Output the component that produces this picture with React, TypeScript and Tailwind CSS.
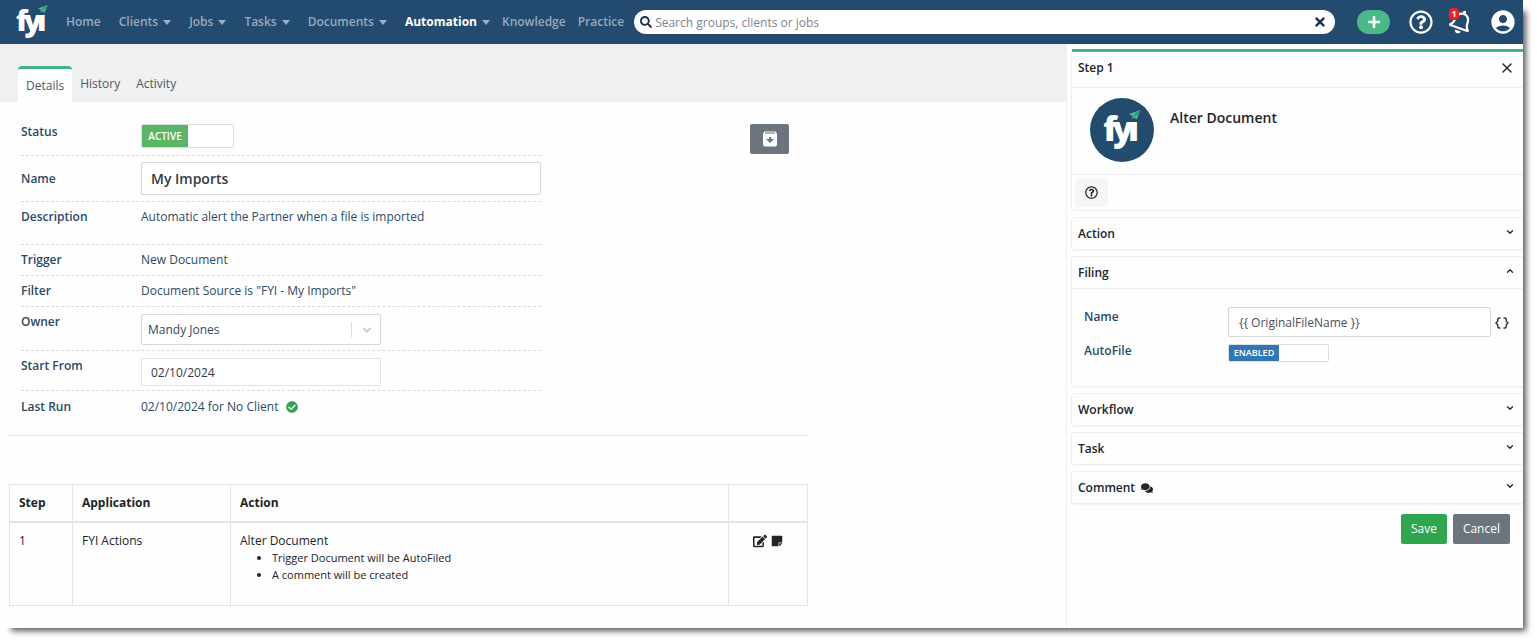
import { useState, type ReactNode } from "react";
import {
  FaCheckCircle,
  FaChevronDown,
  FaComments,
  FaEdit,
  FaPlus,
  FaRegBell,
  FaRegQuestionCircle,
  FaSearch,
  FaStickyNote,
  FaTimes,
} from "react-icons/fa";
import { MdAccountCircle } from "react-icons/md";
import { LuChevronDown, LuChevronUp, LuX } from "react-icons/lu";

const NAV = [
  { label: "Home", menu: false },
  { label: "Clients", menu: true },
  { label: "Jobs", menu: true },
  { label: "Tasks", menu: true },
  { label: "Documents", menu: true },
  { label: "Automation", menu: true, active: true },
  { label: "Knowledge", menu: false },
  { label: "Practice", menu: false },
];

function Logo({ className }: { className: string }) {
  return (
    <svg viewBox="0 0 32 34" className={`overflow-visible ${className}`} role="img" aria-label="FYI">
      <text
        x="0 8 21"
        y="26"
        fill="#ffffff"
        fontFamily="'Open Sans', sans-serif"
        fontWeight="800"
        fontSize="29"
      >
        fyı
      </text>
      <path d="M22 3.500 31.500 0 28.500 8 26.300 6.300 24.800 7.800 24.800 5Z" fill="#4bbd8c" />
      <path d="M24.800 5 30 1.500 26.300 6.300" fill="none" stroke="#2b6b73" strokeWidth="0.6" />
    </svg>
  );
}

function Row({ label, htmlFor, className, children }: {
  label: string;
  htmlFor?: string;
  className: string;
  children: ReactNode;
}) {
  return (
    <div className={`grid grid-cols-[120px_1fr] border-b border-dashed border-[#d9dbdd] ${className}`}>
      {htmlFor ? (
        <label htmlFor={htmlFor} className="font-semibold">{label}</label>
      ) : (
        <span className="font-semibold">{label}</span>
      )}
      <div>{children}</div>
    </div>
  );
}

function Section({ title, open, icon, children }: {
  title: string;
  open?: boolean;
  icon?: ReactNode;
  children?: ReactNode;
}) {
  const [expanded, setExpanded] = useState(Boolean(open));
  return (
    <section className="mt-1.5 rounded-l-sm border border-r-0 border-[#eeeff1] shadow-xs">
      <button
        type="button"
        aria-expanded={expanded}
        onClick={() => setExpanded(!expanded)}
        className="flex h-[31px] w-full items-center justify-between pr-2 pl-1.5 font-semibold"
      >
        <span className="flex items-center gap-1.5">{title}{icon}</span>
        {expanded ? <LuChevronUp className="mb-1 size-2.5" strokeWidth={3} /> : <LuChevronDown className="mb-1 size-2.5" strokeWidth={3} />}
      </button>
      {expanded && children}
    </section>
  );
}

export default function App() {
  return (
    <div className="flex min-h-screen flex-col bg-white pr-3.5 pb-3.5 font-['Open_Sans',sans-serif] text-[12px] leading-4 text-[#212529]">
      <div className="flex flex-1 flex-col bg-[#fefefe] shadow-[7px_7px_6px_-4px_rgba(0,0,0,0.65)]">
        <header className="flex h-11 items-center bg-[#234b70] pl-4">
          <a href="#home" aria-label="FYI home"><Logo className="h-[34px] w-8" /></a>
          <nav className="ml-[18px] flex items-center gap-3">
            {NAV.map((item) => (
              <a
                key={item.label}
                href={`#${item.label.toLowerCase()}`}
                className={`flex items-center gap-[5px] whitespace-nowrap ${item.menu ? "ml-1.5" : ""} ${
                  item.active ? "font-bold text-white" : "font-semibold text-[#97a9bc]"
                }`}
              >
                {item.label}
                {item.menu && (
                  <svg viewBox="0 0 8 5" className="h-[5px] w-2 fill-[#9dafc0]"><path d="M0 0h8L4 5z" /></svg>
                )}
              </a>
            ))}
          </nav>
          <div className="ml-2.5 flex h-6 flex-1 items-center rounded-full bg-white pr-2 pl-1.5 text-[#1d3650]">
            <FaSearch className="size-3" />
            <input
              aria-label="Search"
              placeholder="Search groups, clients or jobs"
              className="ml-[3px] h-full flex-1 bg-transparent outline-none placeholder:text-[#7d858c]"
            />
            <button type="button" aria-label="Clear search"><FaTimes className="size-3.5" /></button>
          </div>
          <div className="flex items-center pr-1.5 pl-[22px] text-white">
            <button type="button" aria-label="Add" className="flex h-6 w-[33px] items-center justify-center rounded-full bg-[#4ab98a]">
              <FaPlus className="size-3.5" />
            </button>
            <button type="button" aria-label="Help" className="ml-[19px]"><FaRegQuestionCircle className="size-6" /></button>
            <button type="button" aria-label="Notifications" className="relative ml-4">
              <FaRegBell className="size-6 rotate-[20deg]" />
              <span className="absolute -top-0.5 left-0 flex h-3 w-2.5 items-center justify-center rounded-sm bg-[#f51d1d] text-[9px] leading-3 font-bold">1</span>
            </button>
            <button type="button" aria-label="Account" className="ml-4"><MdAccountCircle className="size-7" /></button>
          </div>
        </header>

        <div className="flex flex-1">
          <main className="min-w-0 flex-1">
            <div role="tablist" className="flex h-[58px] items-end bg-[#eff0f2] pl-[18px] text-[#4d5862]">
              <button role="tab" aria-selected="true" type="button" className="h-9 rounded-t-sm border-t-3 border-[#43b384] bg-[#fefefe] px-2">Details</button>
              <button role="tab" aria-selected="false" type="button" className="h-9 px-2">History</button>
              <button role="tab" aria-selected="false" type="button" className="h-9 px-2">Activity</button>
            </div>

            <div className="max-w-[808px] pl-2">
              <div className="flex items-start justify-between border-b border-[#e2e4e6] pt-[22px] pr-[19px] pb-5 pl-[13px]">
                <div className="w-[520px] text-[#2c4a66]">
                  <Row label="Status" className="h-8 items-start">
                    <label className="flex h-6 w-[93px] overflow-hidden rounded-xs border border-[#dcdee0] bg-white">
                      <input type="checkbox" defaultChecked className="sr-only" aria-label="Status" />
                      <span className="flex w-[46px] items-center justify-center bg-[#5cb566] text-[10px] font-semibold text-white">ACTIVE</span>
                    </label>
                  </Row>
                  <Row label="Name" htmlFor="name" className="h-[46px] items-center">
                    <input id="name" defaultValue="My Imports" className="block h-[33px] w-full rounded-xs border border-[#d5d8db] bg-white px-[9px] text-[14px] font-semibold text-[#343a40]" />
                  </Row>
                  <Row label="Description" className="h-[43px] items-start pt-[7px]">Automatic alert the Partner when a file is imported</Row>
                  <Row label="Trigger" className="h-[31px] items-center">New Document</Row>
                  <Row label="Filter" className="h-[31px] items-center">Document Source is "FYI - My Imports"</Row>
                  <Row label="Owner" htmlFor="owner" className="h-11 items-start pt-[7px]">
                    <div className="relative h-[31px] w-60">
                      <select id="owner" className="size-full appearance-none rounded-xs border border-[#d5d8db] bg-white px-1.5">
                        <option>Mandy Jones</option>
                      </select>
                      <span className="pointer-events-none absolute inset-y-2 right-0 flex w-[30px] items-center justify-center border-l border-[#d9dbdd] text-[#c6c8ca]">
                        <FaChevronDown className="size-2.5" />
                      </span>
                    </div>
                  </Row>
                  <Row label="Start From" htmlFor="start" className="h-10 items-start pt-[7px]">
                    <input id="start" defaultValue="02/10/2024" className="block h-7 w-60 rounded-xs border border-[#e0e2e4] bg-white px-[9px] text-[#343a40]" />
                  </Row>
                  <div className="grid grid-cols-[120px_1fr] pt-2">
                    <span className="font-semibold">Last Run</span>
                    <span className="flex items-center gap-2">02/10/2024 for No Client <FaCheckCircle className="size-3 text-[#2ea44c]" /></span>
                  </div>
                </div>
                <button type="button" aria-label="Archive" className="flex h-[30px] w-[39px] items-center justify-center rounded-xs bg-[#6c757d]">
                  <svg viewBox="0 0 16 16" className="size-4">
                    <path d="M2.500 0.500h11l1.500 2v11a2 2 0 0 1-2 2H3a2 2 0 0 1-2-2v-11z" fill="#fff" />
                    <path d="M3 2h10" stroke="#6c757d" />
                    <path d="M7 6h2v2h3l-4 4-4-4h3z" fill="#6c757d" />
                  </svg>
                </button>
              </div>

              <table className="mt-12 ml-px w-[799px] table-fixed border-collapse text-left">
                <colgroup>
                  <col className="w-[63px]" />
                  <col className="w-[158px]" />
                  <col />
                  <col className="w-[79px]" />
                </colgroup>
                <thead>
                  <tr className="h-[37px]">
                    <th className="border border-b-2 border-[#e2e4e6] px-[9px]">Step</th>
                    <th className="border border-b-2 border-[#e2e4e6] px-[9px]">Application</th>
                    <th className="border border-b-2 border-[#e2e4e6] px-[9px]">Action</th>
                    <th className="border border-b-2 border-[#e2e4e6] px-[9px]" aria-label="Tools" />
                  </tr>
                </thead>
                <tbody>
                  <tr className="h-[84px] align-top">
                    <td className="border border-[#e2e4e6] px-[9px] pt-2.5">1</td>
                    <td className="border border-[#e2e4e6] px-[9px] pt-2.5">FYI Actions</td>
                    <td className="border border-[#e2e4e6] px-[9px] pt-2.5">
                      Alter Document
                      <ul className="list-disc pl-8 text-[11px] leading-[17px]">
                        <li>Trigger Document will be AutoFiled</li>
                        <li>A comment will be created</li>
                      </ul>
                    </td>
                    <td className="border border-[#e2e4e6] px-[9px] pt-2.5">
                      <div className="flex h-4 items-center justify-center gap-1">
                        <button type="button" aria-label="Edit step"><FaEdit className="size-3.5" /></button>
                        <button type="button" aria-label="Step note"><FaStickyNote className="size-3" /></button>
                      </div>
                    </td>
                  </tr>
                </tbody>
              </table>
            </div>
          </main>

          <aside className="w-[457px] shrink-0 border-l border-[#eeeff1] pt-[5px] pl-1">
            <div className="rounded-l-sm border-b border-l border-[#eeeff1]">
              <div className="flex h-[39px] items-center justify-between border-t-3 border-b border-t-[#43b384] border-b-[#eeeff1] pr-2 pb-1 pl-1.5">
                <h2 className="font-semibold">Step 1</h2>
                <button type="button" aria-label="Close"><LuX className="size-4" /></button>
              </div>
              <div className="flex h-[87px] items-start border-b border-[#eeeff1] pt-2.5 pl-[18px]">
                <span className="flex size-16 items-center justify-center rounded-full bg-[#234b70]"><Logo className="h-10 w-[38px]" /></span>
                <h3 className="mt-3 ml-4 text-[14px] font-semibold">Alter Document</h3>
              </div>
              <div className="h-[35px] p-[3px]">
                <button type="button" aria-label="Step help" className="flex h-[29px] w-[33px] items-center justify-center rounded-sm bg-[#f6f6f7]">
                  <FaRegQuestionCircle className="size-[13px]" />
                </button>
              </div>
            </div>

            <Section title="Action" />
            <Section title="Filing" open>
              <div className="h-[98px] border-t border-[#eeeff1] pt-[18px] pl-3 text-[#2c4a66]">
                <div className="flex items-start">
                  <label htmlFor="filing-name" className="w-36 pt-0.5 font-semibold">Name</label>
                  <input id="filing-name" defaultValue="{{ OriginalFileName }}" className="h-[30px] min-w-0 flex-1 rounded-xs border border-[#d5d8db] bg-white px-2.5 text-[#495057]" />
                  <button type="button" aria-label="Insert merge field" className="flex h-8 w-8 items-center justify-start pl-1 text-[#343a40]">
                    <svg viewBox="0 0 14 12" className="h-3 w-3.5" fill="none" stroke="currentColor" strokeWidth="1.5">
                      <path d="M5.500 1H4.200Q2.700 1 2.700 2.500V4.300L1 6 2.700 7.700V9.500Q2.700 11 4.200 11H5.500M8.500 1h1.300q1.500 0 1.500 1.500V4.300L13 6 11.300 7.700V9.500q0 1.500-1.500 1.500H8.500" />
                    </svg>
                  </button>
                </div>
                <div className="mt-1 flex items-start">
                  <span className="w-36 font-semibold">AutoFile</span>
                  <label className="mt-px flex h-[18px] w-[101px] overflow-hidden rounded-xs border border-[#dcdee0] bg-white">
                    <input type="checkbox" defaultChecked className="sr-only" aria-label="AutoFile" />
                    <span className="flex w-[50px] items-center justify-center bg-[#3276b4] text-[9px] font-semibold text-white">ENABLED</span>
                  </label>
                </div>
              </div>
            </Section>
            <Section title="Workflow" />
            <Section title="Task" />
            <Section title="Comment" icon={<FaComments className="size-3" />} />

            <div className="mt-2.5 flex justify-end gap-1.5 pr-[13px] text-white">
              <button type="button" className="h-[30px] rounded-xs bg-[#30a550] px-2.5">Save</button>
              <button type="button" className="h-[30px] rounded-xs bg-[#6c757d] px-2.5">Cancel</button>
            </div>
          </aside>
        </div>
      </div>
    </div>
  );
}
